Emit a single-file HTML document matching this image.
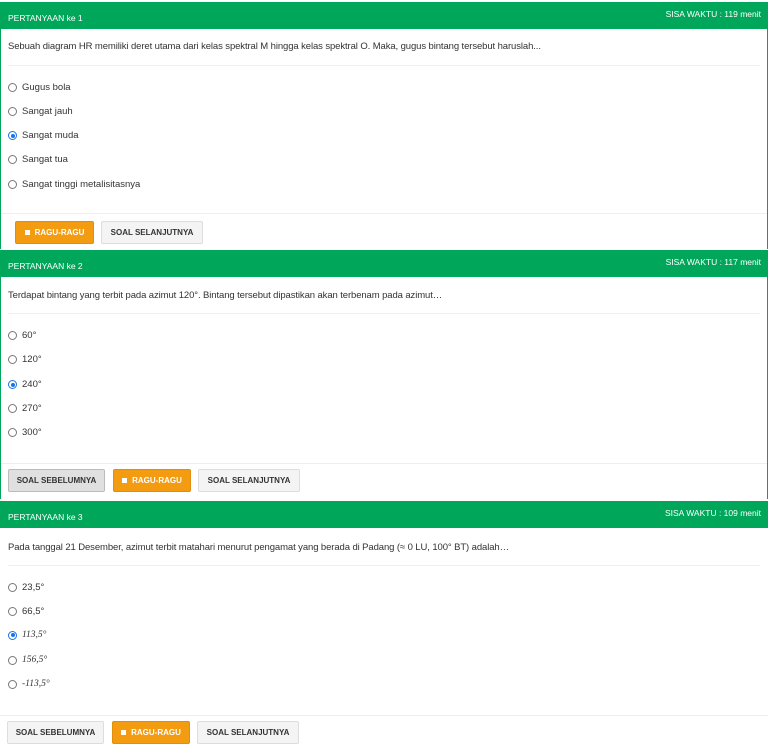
<!DOCTYPE html>
<html><head><style>
*{margin:0;padding:0;box-sizing:border-box}
body{width:768px;height:749px;background:#fff;font-family:"Liberation Sans",sans-serif;color:#333;position:relative;overflow:hidden}
.p{position:absolute;left:0;width:768px;border-left:1px solid #00a65a;border-right:1px solid #00a65a}
.h{position:absolute;left:0;width:768px;height:27px;background:#00a65a;color:#fff;font-size:8.5px}
.h .t{position:absolute;left:8px;top:11px}
.h .w{position:absolute;right:7px;top:7px}
.q{position:absolute;left:8px;font-size:9.5px;letter-spacing:-0.1px}
.hr{position:absolute;left:8px;right:8px;height:1px;background:#eee}
.o{position:absolute;left:8px;font-size:9.5px;display:flex;align-items:center}
.r{width:9px;height:9px;border:1px solid #777;border-radius:50%;margin-right:5px;background:#fff;position:relative}
.r.c{border-color:#1a73e8}
.r.c:after{content:"";position:absolute;left:1.5px;top:1.5px;width:4px;height:4px;border-radius:50%;background:#1a73e8}
.b{position:absolute;height:23px;font-size:8px;font-weight:bold;display:flex;align-items:center;justify-content:center;border-radius:2px;color:#333}
.g{background:#f4f4f4;border:1px solid #ddd}
.d{background:#e0e0e0;border:1px solid #bbb}
.y{background:#f39c12;color:#fff;border:1px solid #e08e0b}
.y:before{content:"";width:5px;height:5px;background:#fff;margin-right:5px}
.i{font-family:"Liberation Serif",serif;font-style:italic}
</style></head><body>
<div class="p" style="top:2px;height:247px"></div>
<div class="h" style="top:2px"><span class="t">PERTANYAAN ke 1</span><span class="w">SISA WAKTU : 119 menit</span></div>
<div class="q" style="top:41px">Sebuah diagram HR memiliki deret utama dari kelas spektral M hingga kelas spektral O. Maka, gugus bintang tersebut haruslah...</div>
<div class="hr" style="top:65px"></div>
<div class="o" style="top:82px"><span class="r"></span>Gugus bola</div>
<div class="o" style="top:106px"><span class="r"></span>Sangat jauh</div>
<div class="o" style="top:130px"><span class="r c"></span>Sangat muda</div>
<div class="o" style="top:154px"><span class="r"></span>Sangat tua</div>
<div class="o" style="top:179px"><span class="r"></span>Sangat tinggi metalisitasnya</div>
<div class="hr" style="top:213px;left:1px;right:1px"></div>
<div class="b y" style="left:15px;top:221px;width:79px">RAGU-RAGU</div>
<div class="b g" style="left:101px;top:221px;width:102px">SOAL SELANJUTNYA</div>

<div class="p" style="top:250px;height:249px"></div>
<div class="h" style="top:250px"><span class="t">PERTANYAAN ke 2</span><span class="w">SISA WAKTU : 117 menit</span></div>
<div class="q" style="top:290px">Terdapat bintang yang terbit pada azimut 120°. Bintang tersebut dipastikan akan terbenam pada azimut…</div>
<div class="hr" style="top:313px"></div>
<div class="o" style="top:330px"><span class="r"></span>60°</div>
<div class="o" style="top:354px"><span class="r"></span>120°</div>
<div class="o" style="top:379px"><span class="r c"></span>240°</div>
<div class="o" style="top:403px"><span class="r"></span>270°</div>
<div class="o" style="top:427px"><span class="r"></span>300°</div>
<div class="hr" style="top:463px;left:1px;right:1px"></div>
<div class="b d" style="left:8px;top:469px;width:97px">SOAL SEBELUMNYA</div>
<div class="b y" style="left:113px;top:469px;width:78px">RAGU-RAGU</div>
<div class="b g" style="left:198px;top:469px;width:102px">SOAL SELANJUTNYA</div>

<div class="h" style="top:501px"><span class="t">PERTANYAAN ke 3</span><span class="w">SISA WAKTU : 109 menit</span></div>
<div class="q" style="top:542px">Pada tanggal 21 Desember, azimut terbit matahari menurut pengamat yang berada di Padang (≈ 0 LU, 100° BT) adalah…</div>
<div class="hr" style="top:565px"></div>
<div class="o" style="top:582px"><span class="r"></span>23,5°</div>
<div class="o" style="top:606px"><span class="r"></span>66,5°</div>
<div class="o" style="top:630px"><span class="r c"></span><span class="i">113,5°</span></div>
<div class="o" style="top:655px"><span class="r"></span><span class="i">156,5°</span></div>
<div class="o" style="top:679px"><span class="r"></span><span class="i">-113,5°</span></div>
<div class="hr" style="top:715px;left:0;right:0"></div>
<div class="b g" style="left:7px;top:721px;width:97px">SOAL SEBELUMNYA</div>
<div class="b y" style="left:112px;top:721px;width:78px">RAGU-RAGU</div>
<div class="b g" style="left:197px;top:721px;width:102px">SOAL SELANJUTNYA</div>
</body></html>
